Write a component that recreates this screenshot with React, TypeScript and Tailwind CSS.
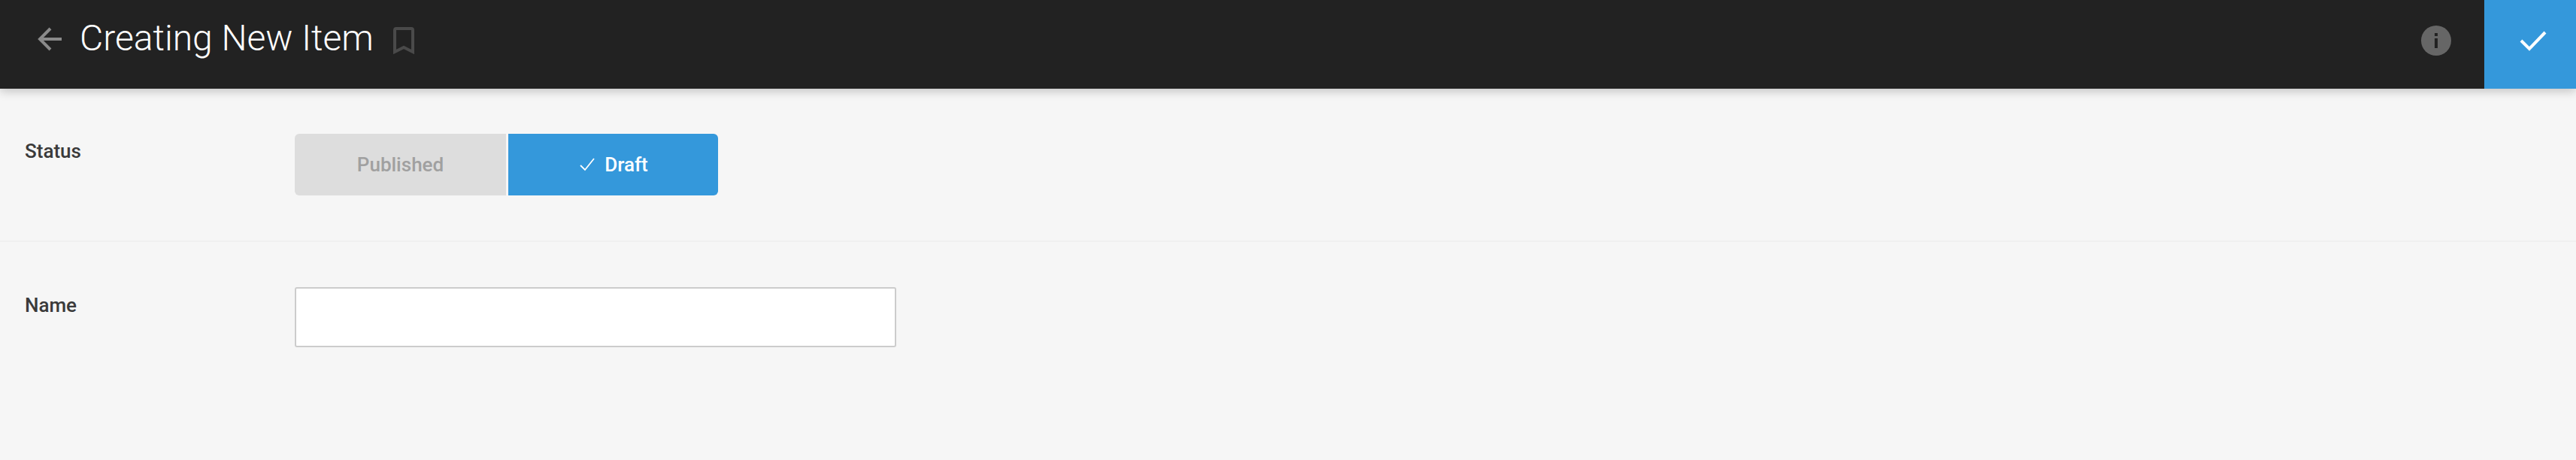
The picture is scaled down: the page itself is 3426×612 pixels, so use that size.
import React from 'react';

export default function App() {
  return (
    <div className="h-[612px] w-full overflow-hidden bg-[#f6f6f6] font-['Roboto',sans-serif]">
      <header className="relative z-10 flex h-[118px] items-center bg-[#222222] shadow-[0_4px_12px_rgba(0,0,0,0.2)]">
        <svg className="mb-[14px] ml-[50px] h-[32px] w-[32px]" viewBox="0 0 32 32" fill="none" stroke="#8a8a8a" strokeWidth="4">
          <path d="M32 16H3" />
          <path d="M17 2L3 16l14 14" />
        </svg>
        <h1 className="mb-[16px] ml-[24px] text-[48px] leading-none font-light text-white">Creating New Item</h1>
        <svg className="mb-[10px] ml-[26px] h-[36px] w-[28px]" viewBox="0 0 28 36" fill="none" stroke="#4a4a4a" strokeWidth="4">
          <path d="M2 33V4q0-2 2-2h20q2 0 2 2v29l-12-6z" />
        </svg>
        <div className="ml-auto flex h-full items-center">
          <div className="mr-[44px] mb-[10px] flex h-[40px] w-[40px] flex-col items-center justify-center gap-[3px] rounded-full bg-[#666666]">
            <span className="h-[4px] w-[4px] bg-[#222222]" />
            <span className="h-[13px] w-[4px] bg-[#222222]" />
          </div>
          <button className="flex h-full w-[122px] items-center justify-center bg-[#3498db] pb-[10px] pl-[7px]">
            <svg className="h-[28px] w-[36px]" viewBox="0 0 36 28" fill="none" stroke="#ffffff" strokeWidth="4">
              <path d="M2 14l11 11L34 3" />
            </svg>
          </button>
        </div>
      </header>

      <section className="flex h-[204px] border-b-2 border-[#f0f0f0] pt-[60px] pl-[33px]">
        <label className="w-[359px] pt-[5px] text-[26px] leading-[36px] font-medium text-[#3a3a3a]">Status</label>
        <div className="flex h-[82px] gap-[3px]">
          <button className="flex w-[281px] items-center justify-center rounded-l-[6px] bg-[#dddddd] text-[26px] font-medium text-[#a0a0a0]">Published</button>
          <button className="flex w-[279px] items-center justify-center gap-[13px] rounded-r-[6px] bg-[#3498db] pl-[2px] text-[26px] font-medium text-white">
            <svg className="h-[20px] w-[20px]" viewBox="0 0 20 20" fill="none" stroke="#ffffff" strokeWidth="1.800">
              <path d="M1 11l6 6L19 2" />
            </svg>
            Draft
          </button>
        </div>
      </section>

      <section className="flex pt-[60px] pl-[33px]">
        <label className="w-[359px] pt-[6px] text-[26px] leading-[36px] font-medium text-[#3a3a3a]">Name</label>
        <input className="h-[80px] w-[800px] rounded-[3px] border-2 border-[#cccccc] bg-white" type="text" />
      </section>
    </div>
  );
}
